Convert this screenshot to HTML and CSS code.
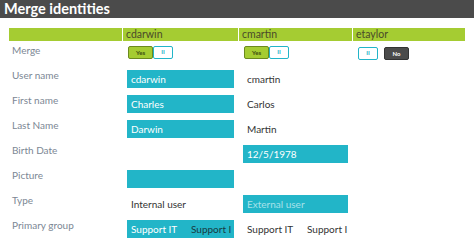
FILE: index.html
```html
<!DOCTYPE html>
<html>
<head>
  <title>Merge identities</title>
  <link rel="stylesheet" href="styles.css">
</head>
<body>
  <div class="titlebar">Merge identities</div>
  <div class="merge">
    <div class="row head">
      <div class="cell"></div>
      <div class="cell">cdarwin</div>
      <div class="cell">cmartin</div>
      <div class="cell">etaylor</div>
    </div>
    <div class="row">
      <div class="label">Merge</div>
      <div class="cell"><span class="toggle"><span class="yes">Yes</span><span class="knob">II</span></span></div>
      <div class="cell"><span class="toggle"><span class="yes">Yes</span><span class="knob">II</span></span></div>
      <div class="cell"><span class="toggle"><span class="knob">II</span><span class="no">No</span></span></div>
    </div>
    <div class="row">
      <div class="label">User name</div>
      <div class="cell"><div class="val sel">cdarwin</div></div>
      <div class="cell"><div class="val">cmartin</div></div>
      <div class="cell"></div>
    </div>
    <div class="row">
      <div class="label">First name</div>
      <div class="cell"><div class="val sel">Charles</div></div>
      <div class="cell"><div class="val">Carlos</div></div>
      <div class="cell"></div>
    </div>
    <div class="row">
      <div class="label">Last Name</div>
      <div class="cell"><div class="val sel">Darwin</div></div>
      <div class="cell"><div class="val">Martin</div></div>
      <div class="cell"></div>
    </div>
    <div class="row">
      <div class="label">Birth Date</div>
      <div class="cell"></div>
      <div class="cell"><div class="val sel">12/5/1978</div></div>
      <div class="cell"></div>
    </div>
    <div class="row">
      <div class="label">Picture</div>
      <div class="cell"><div class="val sel"></div></div>
      <div class="cell"></div>
      <div class="cell"></div>
    </div>
    <div class="row">
      <div class="label">Type</div>
      <div class="cell"><div class="val">Internal user</div></div>
      <div class="cell"><div class="val sel faded">External user</div></div>
      <div class="cell"></div>
    </div>
    <div class="row">
      <div class="label">Primary group</div>
      <div class="cell"><div class="val sel groups"><span>Support IT</span><span class="other">Support I</span></div></div>
      <div class="cell"><div class="val groups"><span>Support IT</span><span>Support I</span></div></div>
      <div class="cell"></div>
    </div>
  </div>
</body>
</html>
```

FILE: styles.css
```css
body {
  margin: 0;
  font-family: Lato, "Open Sans", sans-serif;
  background: #fff;
}
.titlebar {
  background: #4b4b4b;
  color: #fff;
  font-weight: bold;
  font-size: 14.5px;
  height: 18px;
  line-height: 17px;
  padding-left: 4px;
}
.merge {
  margin: 10px 9px 0;
}
.row {
  display: grid;
  grid-template-columns: 113px 116px 114px 113px;
  height: 25px;
  font-size: 10px;
}
.row.head {
  height: 13px;
  background: #a5cc32;
  color: #4a4a2a;
  line-height: 13px;
  font-size: 10.5px;
}
.row.head .cell {
  border-left: 1px solid #fff;
  padding: 0 0 0 3px;
}
.row.head .cell:first-child {
  border-left: none;
}
.label {
  color: #7c8794;
  padding: 3px 0 0 3px;
}
.cell {
  padding: 4px 4px 0 5px;
}
.val {
  height: 18px;
  line-height: 18px;
  padding-left: 4px;
  color: #333;
}
.val.sel {
  background: #22b5c8;
  color: #fff;
}
.val.faded {
  color: #a8e2ea;
}
.groups {
  display: flex;
  overflow: hidden;
}
.groups span {
  flex: none;
  white-space: nowrap;
}
.groups span:first-child {
  width: 60px;
}
.groups .other {
  color: #183a42;
}
.toggle {
  display: inline-flex;
  height: 13px;
  margin: -3px 0 0 1px;
}
.yes, .no {
  width: 23px;
  font-size: 6px;
  font-weight: bold;
  text-align: center;
  line-height: 11px;
  border-radius: 2px;
}
.yes {
  background: #a5cc32;
  border: 1px solid #6b8a1e;
  color: #3a4a10;
}
.no {
  background: #4b4b4b;
  border: 1px solid #333;
  color: #fff;
  margin-left: 6px;
}
.knob {
  width: 18px;
  background: #fff;
  border: 1.5px solid #22b5c8;
  border-radius: 2px;
  color: #22b5c8;
  font-size: 6px;
  font-weight: bold;
  text-align: center;
  line-height: 10px;
}
```
